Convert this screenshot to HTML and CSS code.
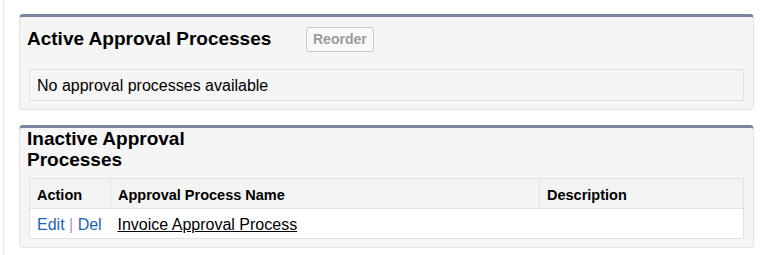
FILE: index.html
```html
<!DOCTYPE html>
<html lang="en">
<head>
    <meta charset="UTF-8">
    <title>Approval Processes</title>
    <link rel="stylesheet" href="styles.css">
</head>
<body>
    <div class="page">
        <div class="panel">
            <div class="panel-header">
                <h2 class="panel-title">Active Approval Processes</h2>
                <button class="btn" disabled>Reorder</button>
            </div>
            <div class="empty-box">No approval processes available</div>
        </div>

        <div class="panel">
            <div class="panel-header">
                <h2 class="panel-title">Inactive Approval Processes</h2>
            </div>
            <table class="list">
                <thead>
                    <tr>
                        <th class="col-action">Action</th>
                        <th class="col-name">Approval Process Name</th>
                        <th>Description</th>
                    </tr>
                </thead>
                <tbody>
                    <tr>
                        <td><a href="#" class="action-link">Edit</a> <span class="sep">|</span> <a href="#" class="action-link">Del</a></td>
                        <td><a href="#" class="name-link">Invoice Approval Process</a></td>
                        <td></td>
                    </tr>
                </tbody>
            </table>
        </div>
    </div>
</body>
</html>
```

FILE: styles.css
```css
body {
    margin: 0;
    background: #fff;
    font-family: "Liberation Sans", Arial, sans-serif;
    color: #000;
}
.page {
    margin-left: 3px;
    padding: 14px 14px 0 15px;
    border-left: 1px solid #e6e6e6;
    min-height: 241px;
}
.panel {
    background: #f5f5f5;
    border: 1px solid #e1e3e5;
    border-top: 3px solid #7b869f;
    border-radius: 4px;
    padding: 0 9px 8px;
    margin-bottom: 15px;
}
.panel-header {
    display: flex;
    align-items: center;
    min-height: 42px;
}
.panel-title {
    width: 252px;
    margin: 0 0 0 -2px;
    font-size: 19px;
    line-height: 21px;
    font-weight: bold;
}
.btn {
    margin: 2px 0 0 27px;
    height: 25px;
    padding: 0 6px;
    font-family: "Liberation Sans", Arial, sans-serif;
    font-size: 14px;
    font-weight: bold;
    color: #9b9b9b;
    background: #f8f8f8;
    border: 1px solid #c9c9c9;
    border-radius: 3px;
}
.empty-box {
    margin-top: 10px;
    border: 1px solid #dfe1e2;
    background: #f5f5f5;
    padding: 2px 7px 0;
    height: 28px;
    line-height: 28px;
    font-size: 16px;
}
.list {
    width: 100%;
    margin-top: 8px;
    border-collapse: collapse;
    border: 1px solid #e0e3e5;
    background: #fff;
}
.list th {
    background: #f2f3f3;
    height: 27px;
    padding: 2px 7px 0;
    text-align: left;
    font-size: 14.5px;
    font-weight: bold;
    border-left: 1px solid #e0e3e5;
    border-bottom: 1px solid #e0e3e5;
}
.list th:first-child {
    border-left: none;
}
.col-action {
    width: 66px;
}
.col-name {
    width: 414px;
}
.list td {
    height: 27px;
    padding: 2px 7px 0;
    font-size: 16px;
}
.action-link {
    color: #1d63b7;
    text-decoration: none;
}
.sep {
    color: #a0a0a0;
}
.name-link {
    color: #000;
    text-decoration: underline;
}
```
